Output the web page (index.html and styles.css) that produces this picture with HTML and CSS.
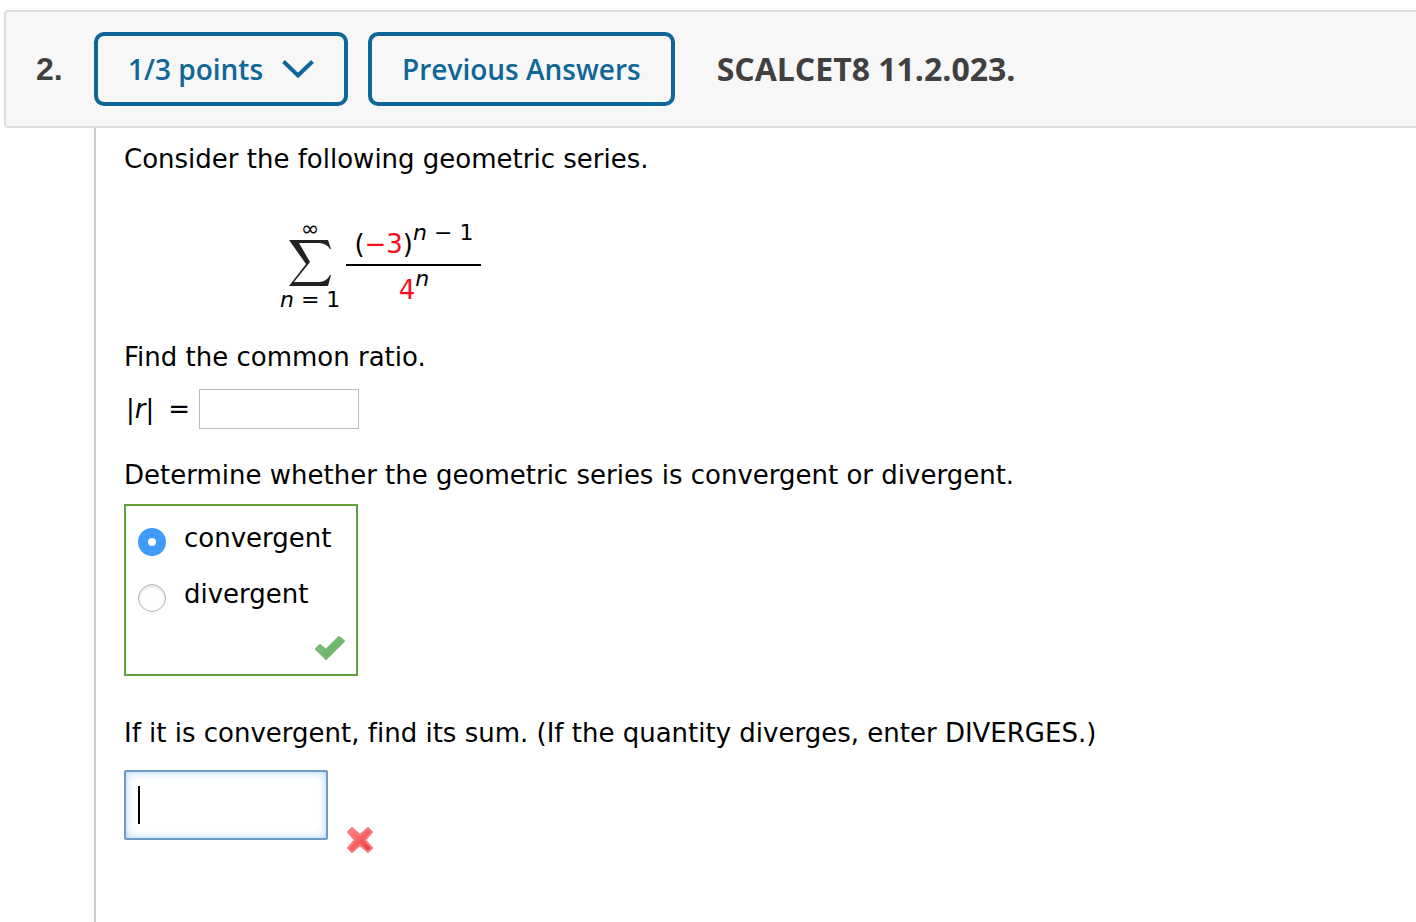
FILE: index.html
```
<!DOCTYPE html>
<html lang="en">
<head>
    <meta charset="UTF-8">
    <meta name="viewport" content="width=device-width, initial-scale=1.0">
    <title>SCALCET8 11.2.023.</title>
    <link rel="stylesheet" href="styles.css">
</head>
<body>
    <div class="question">
        <div class="question-header">
            <span class="question-number">2.</span>
            <button class="header-btn" type="button">
                1/3 points
                <svg class="chevron" width="32" height="20" viewBox="0 0 32 20" aria-hidden="true">
                    <path d="M1.5 2.5 L16 16.5 L30.5 2.5" fill="none" stroke="#0f6698" stroke-width="4"/>
                </svg>
            </button>
            <button class="header-btn" type="button">Previous Answers</button>
            <h1 class="question-name">SCALCET8 11.2.023.</h1>
        </div>

        <div class="question-body">
            <p>Consider the following geometric series.</p>

            <div class="series">
                <div class="sum">
                    <span class="sum-upper">∞</span>
                    <svg width="42" height="46" viewBox="0 0 42 46" aria-hidden="true">
                        <path d="M0 0 H39 L42 9 H41 Q38 4 31 3 H10 L21 22 L5 42 H31 Q38 41 41 35 H42 L39 46 H0 L17 24 Z" fill="#222"/>
                    </svg>
                    <span class="sum-lower"><i>n</i> = 1</span>
                </div>
                <div class="fraction">
                    <div class="numerator">(<span class="red">−3</span>)<sup><i>n</i> − 1</sup></div>
                    <div class="denominator"><span class="red">4</span><sup><i>n</i></sup></div>
                </div>
            </div>

            <p>Find the common ratio.</p>
            <div class="ratio">
                <label for="ratio"><span>|<i>r</i>|</span> <span>=</span></label>
                <input class="ratio-input" type="text" id="ratio">
            </div>

            <p id="choiceText">Determine whether the geometric series is convergent or divergent.</p>
            <div class="choices" role="radiogroup" aria-labelledby="choiceText">
                <label class="choice"><input type="radio" name="series" checked><span>convergent</span></label>
                <label class="choice"><input type="radio" name="series"><span>divergent</span></label>
                <svg class="check" width="32" height="28" viewBox="0 0 32 28" role="img" aria-label="Correct">
                    <defs>
                        <linearGradient id="green" x1="0" y1="0" x2="1" y2="1">
                            <stop offset="0" stop-color="#8ccb88"/>
                            <stop offset="1" stop-color="#58a858"/>
                        </linearGradient>
                    </defs>
                    <path d="M2 15 L6 11 L12 16 L25 3 L30 7 L12 25 Z" fill="url(#green)" stroke="#74b873" stroke-width="2" stroke-linejoin="round"/>
                </svg>
            </div>

            <p><label for="sum">If it is convergent, find its sum. (If the quantity diverges, enter DIVERGES.)</label></p>
            <div class="answer">
                <input class="answer-input" type="text" id="sum">
                <svg class="cross" width="28" height="28" viewBox="0 0 28 28" role="img" aria-label="Incorrect">
                    <defs>
                        <linearGradient id="red" x1="0" y1="0" x2="1" y2="1">
                            <stop offset="0" stop-color="#ff8a8a"/>
                            <stop offset="1" stop-color="#ee3338"/>
                        </linearGradient>
                    </defs>
                    <path d="M6 2 L14 9 L22 2 L26 6 L19 14 L26 22 L22 26 L14 19 L6 26 L2 22 L9 14 L2 6 Z" fill="url(#red)" stroke="#f97c7f" stroke-width="2" stroke-linejoin="round"/>
                </svg>
            </div>
        </div>
    </div>
</body>
</html>
```
FILE: styles.css
```
* {
    margin: 0;
    padding: 0;
    box-sizing: border-box;
}

body {
    font-family: "DejaVu Sans", Verdana, sans-serif;
    font-size: 26px;
    line-height: 32px;
    font-variant-ligatures: none;
    color: #000;
    background-color: #fff;
}

.question {
    display: flex;
    flex-direction: column;
    min-height: 100vh;
    padding: 10px 0 0 4px;
}

.question-header {
    display: flex;
    align-items: center;
    padding: 20px 30px;
    background-color: #f7f7f7;
    border: 2px solid #dedede;
    border-right: none;
    border-radius: 4px 0 0 4px;
}

.question-number {
    width: 58px;
    font-family: "Liberation Sans", Arial, sans-serif;
    font-size: 32px;
    font-weight: bold;
    color: #404040;
}

.header-btn {
    display: flex;
    align-items: center;
    gap: 19px;
    height: 74px;
    margin-right: 20px;
    padding: 0 30px;
    font-family: "Open Sans", sans-serif;
    font-size: 28px;
    font-weight: 600;
    color: #0f6698;
    background-color: transparent;
    border: 4px solid #0f6698;
    border-radius: 10px;
    cursor: pointer;
}

.question-name {
    margin-left: 22px;
    font-family: "Open Sans", sans-serif;
    font-size: 32px;
    font-weight: bold;
    color: #404040;
}

.question-body {
    flex: 1;
    margin-left: 90px;
    padding: 15px 28px;
    border-left: 2px solid #ccc;
}

/* Series */
.series {
    display: flex;
    align-items: flex-start;
    gap: 6px;
    margin: 43px 0 27px 156px;
}

.sum {
    display: flex;
    flex-direction: column;
    align-items: center;
    font-size: 22px;
}

.sum-upper {
    line-height: 22px;
}

.sum-lower {
    line-height: 28px;
}

.fraction {
    margin-top: 10px;
    text-align: center;
}

.numerator {
    padding: 0 8px 4px;
    border-bottom: 2px solid #000;
}

.denominator {
    padding-top: 8px;
}

sup {
    font-size: 22px;
    line-height: 0;
    vertical-align: 13px;
}

.red {
    color: #fc0d1b;
}

/* Answers */
.ratio {
    display: flex;
    align-items: center;
    gap: 9px;
    margin: 16px 0 30px;
}

.ratio label {
    display: flex;
    gap: 14px;
    padding-left: 2px;
}

.ratio-input {
    width: 160px;
    height: 40px;
    padding: 0 8px;
    font: inherit;
    border: 1px solid #bbb;
}

.choices {
    display: flex;
    flex-direction: column;
    width: 234px;
    margin: 13px 0 41px;
    padding: 16px 10px 12px 12px;
    border: 2px solid #60a03c;
}

.choice {
    display: flex;
    gap: 18px;
    height: 56px;
}

.choice input {
    appearance: none;
    width: 28px;
    height: 28px;
    margin-top: 6px;
    border: 1px solid #b4b4b4;
    border-radius: 50%;
    box-shadow: inset 0 2px 3px #ddd;
}

.choice input:checked {
    background-color: #fff;
    border: 10px solid #419bf9;
    box-shadow: none;
}

.check {
    align-self: flex-end;
}

.answer {
    display: flex;
    align-items: flex-start;
    gap: 18px;
    margin-top: 21px;
}

.answer-input {
    width: 204px;
    height: 70px;
    padding: 0 12px;
    font: inherit;
    /* text cursor */
    background: linear-gradient(#000, #000) no-repeat 12px center / 2px 38px;
    border: 2px solid #6d9bc3;
    border-radius: 2px;
    box-shadow: inset 0 0 8px #a9d0f8;
    outline: none;
}

.cross {
    margin-top: 56px;
}
```
